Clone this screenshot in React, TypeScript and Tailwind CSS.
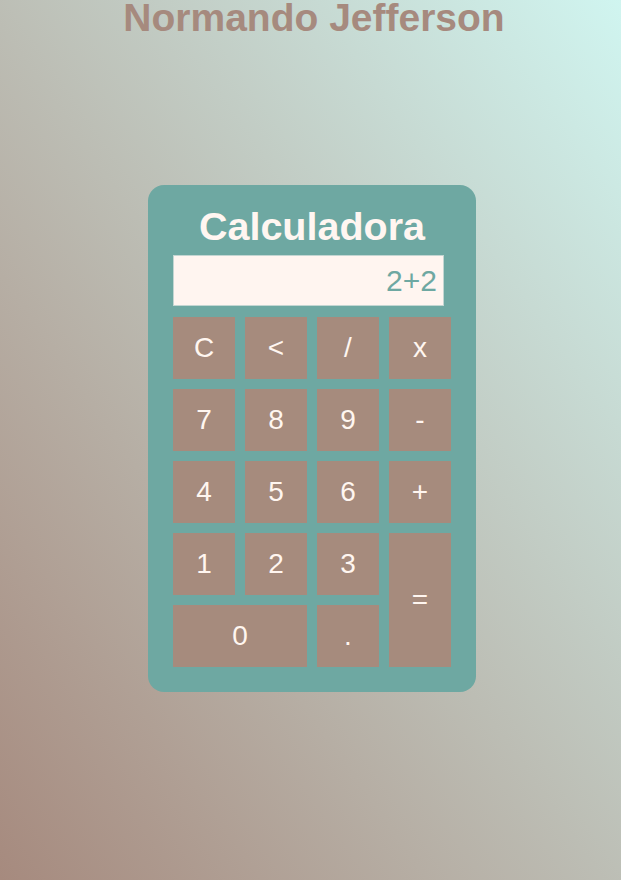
const keys: { label: string; span?: string }[] = [
  { label: "C" },
  { label: "<" },
  { label: "/" },
  { label: "x" },
  { label: "7" },
  { label: "8" },
  { label: "9" },
  { label: "-" },
  { label: "4" },
  { label: "5" },
  { label: "6" },
  { label: "+" },
  { label: "1" },
  { label: "2" },
  { label: "3" },
  { label: "=", span: "row-span-2" },
  { label: "0", span: "col-span-2" },
  { label: "." },
];

export default function App() {
  return (
    <div
      className="flex min-h-[880px] flex-col items-center bg-linear-to-tr from-[#a68a7e] to-[#d0f5f0]"
      style={{ fontFamily: '"Liberation Sans", Arial, sans-serif' }}
    >
      {/* Header */}
      <h1 className="-mt-[5px] ml-[7px] text-[39px] font-bold leading-[45px] text-[#a68a7e]">
        Normando Jefferson
      </h1>

      {/* Calculator */}
      <div className="ml-[3px] mt-[145px] w-[328px] rounded-[16px] bg-[#6ea8a2] px-[25px] pb-[25px] pt-[19px]">
        <h2 className="text-center text-[39.5px] font-bold leading-[45px] text-[#fff6f1]">Calculadora</h2>
        <div className="mt-[6px] flex h-[51px] w-[271px] items-center justify-end border border-[#c3d6d2] bg-[#fff5f0] pr-[6px] text-[30px] text-[#6ea8a2]">
          2+2
        </div>
        <div className="mt-[11px] grid grid-cols-[repeat(4,62px)] grid-rows-[repeat(5,62px)] gap-[10px]">
          {keys.map((k) => (
            <button
              key={k.label}
              className={`flex items-center justify-center bg-[#a68b7d] text-[28px] text-[#fff6f0] ${k.span ?? ""}`}
            >
              {k.label}
            </button>
          ))}
        </div>
      </div>
    </div>
  );
}
